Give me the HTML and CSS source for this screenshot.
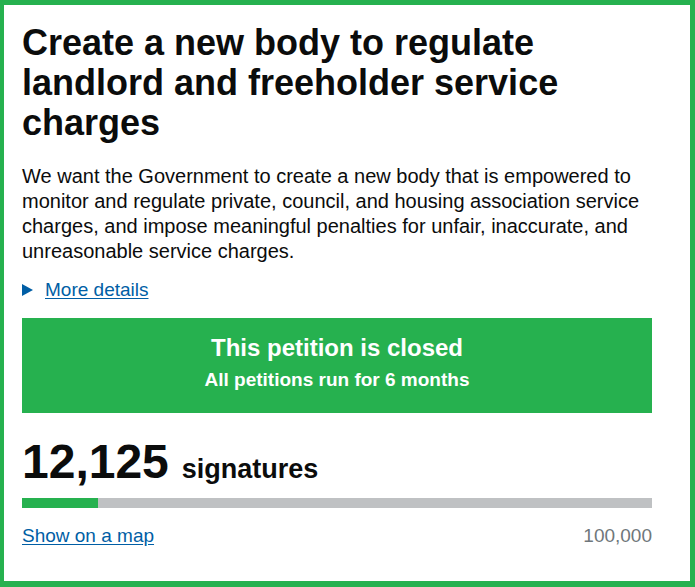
FILE: index.html
```html
<!DOCTYPE html>
<html lang="en">
<head>
<meta charset="utf-8">
<title>Petition</title>
<link rel="stylesheet" href="styles.css">
</head>
<body>
<main class="frame">
  <h1 class="title">Create a new body to regulate landlord and freeholder service charges</h1>
  <p class="summary">We want the Government to create a new body that is empowered to monitor and regulate private, council, and housing association service charges, and impose meaningful penalties for unfair, inaccurate, and unreasonable service charges.</p>
  <div class="details"><span class="arrow"></span><a class="link" href="#">More details</a></div>
  <div class="banner">
    <div class="banner-title">This petition is closed</div>
    <div class="banner-sub">All petitions run for 6 months</div>
  </div>
  <div class="count"><span class="count-num">12,125</span><span class="count-label">signatures</span></div>
  <div class="bar"><div class="bar-fill" style="width:12.125%"></div></div>
  <div class="foot">
    <a class="link" href="#">Show on a map</a>
    <span class="target">100,000</span>
  </div>
</main>
</body>
</html>
```
FILE: styles.css
```css
html, body {
  margin: 0;
  padding: 0;
  background: #fff;
}
body {
  font-family: "Liberation Sans", Arial, sans-serif;
  color: #0b0c0c;
}
.frame {
  box-sizing: border-box;
  width: 695px;
  height: 587px;
  border-style: solid;
  border-color: #26b14f;
  border-width: 5px 5px 6px 4px;
  padding: 18px 38px 0 18px;
}
.title {
  margin: 0;
  font-size: 36px;
  line-height: 40px;
  font-weight: bold;
}
.summary {
  margin: 21px 0 0;
  font-size: 20px;
  line-height: 25px;
}
.details {
  margin-top: 13px;
  display: flex;
  align-items: center;
  font-size: 19px;
  line-height: 25px;
}
.arrow {
  width: 0;
  height: 0;
  border-left: 11px solid #005ea5;
  border-top: 6.5px solid transparent;
  border-bottom: 6.5px solid transparent;
  margin-right: 12px;
}
.link {
  color: #005ea5;
  text-decoration: underline;
  text-underline-offset: 2px;
}
.banner {
  margin-top: 16px;
  background: #26b14f;
  color: #fff;
  text-align: center;
  padding: 15px 0 20px;
  font-weight: bold;
}
.banner-title {
  font-size: 24px;
  line-height: 30px;
}
.banner-sub {
  margin-top: 4px;
  font-size: 19px;
  line-height: 26px;
}
.count {
  margin-top: 19px;
  display: flex;
  align-items: baseline;
  font-weight: bold;
}
.count-num {
  font-size: 48px;
  line-height: 60px;
  margin-right: 13px;
}
.count-label {
  font-size: 27px;
}
.bar {
  margin-top: 6px;
  height: 10px;
  background: #bfc1c3;
}
.bar-fill {
  height: 100%;
  background: #26b14f;
}
.foot {
  margin-top: 15px;
  display: flex;
  justify-content: space-between;
  font-size: 19px;
  line-height: 25px;
}
.target {
  color: #6f777b;
}
```
